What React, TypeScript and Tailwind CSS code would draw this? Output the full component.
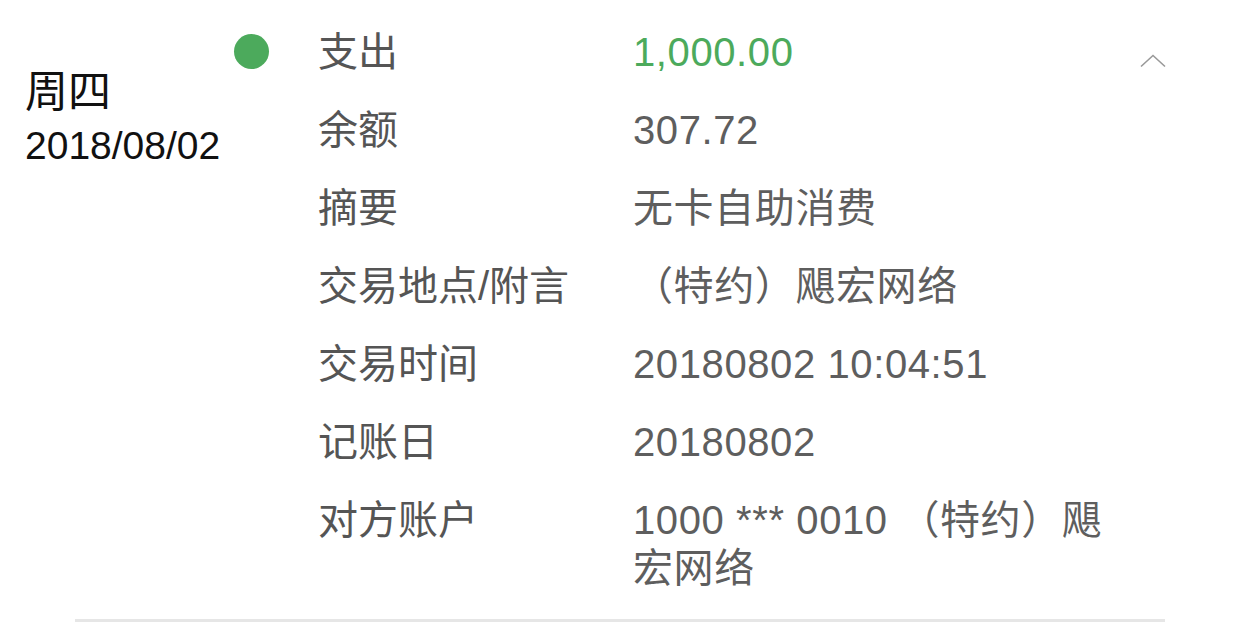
import React from 'react';

type Row = { label: string; value: string; highlight?: boolean };

const rows: Row[] = [
  { label: '支出', value: '1,000.00', highlight: true },
  { label: '余额', value: '307.72' },
  { label: '摘要', value: '无卡自助消费' },
  { label: '交易地点/附言', value: '（特约）飓宏网络' },
  { label: '交易时间', value: '20180802 10:04:51' },
  { label: '记账日', value: '20180802' },
  { label: '对方账户', value: '1000 *** 0010 （特约）飓宏网络' },
];

const font = { fontFamily: '"Liberation Sans", "Noto Sans CJK SC", sans-serif' };

export default function App() {
  return (
    <div className="min-h-screen bg-white" style={font}>
      <div className="flex pt-[28px] pl-[25px]">
        {/* day + date */}
        <div className="w-[209px] pt-[40px] text-[#111]">
          <div className="text-[43px] leading-[48px]">周四</div>
          <div className="text-[39px] leading-[44px] mt-[8px]">2018/08/02</div>
        </div>

        {/* status dot */}
        <div className="w-[36px] pt-[6px]">
          <div className="w-[35px] h-[35px] rounded-full bg-[#4caa5c]" />
        </div>

        {/* detail rows */}
        <div className="ml-[48px] flex flex-col gap-[30px]">
          {rows.map(r => (
            <div key={r.label} className="flex text-[40px] leading-[48px]">
              <div className="w-[315px] shrink-0 text-[#555]">{r.label}</div>
              <div
                className={
                  r.highlight
                    ? 'w-[490px] tracking-[0.6px] text-[#4caa5c]'
                    : 'w-[490px] tracking-[0.6px] text-[#5e5e5e]'
                }
              >
                {r.value}
              </div>
            </div>
          ))}
        </div>

        <div className="ml-[17px] pt-[26px]">
          <svg width="26" height="14" viewBox="0 0 26 14" fill="none">
            <path d="M1 12.5 L13 1.5 L25 12.5" stroke="#999" strokeWidth="1.6" />
          </svg>
        </div>
      </div>

      <div className="ml-[75px] w-[1090px] h-[3px] bg-[#e6e6e6] mt-[27px]" />
    </div>
  );
}
